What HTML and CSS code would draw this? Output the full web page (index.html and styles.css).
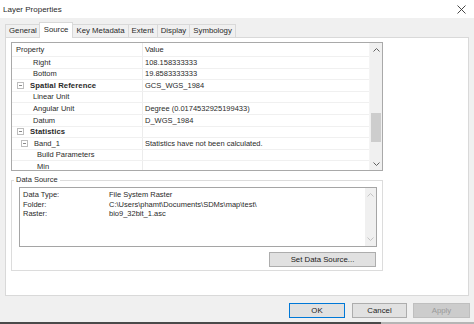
FILE: index.html
```html
<!DOCTYPE html>
<html>
<head>
<meta charset="utf-8">
<link rel="stylesheet" href="styles.css">
</head>
<body>
<div class="window">
  <div class="titlebar">
    <span class="title">Layer Properties</span>
    <svg class="close" width="9" height="9" viewBox="0 0 9 9"><path d="M0.5 0.5 L8.5 8.5 M8.5 0.5 L0.5 8.5" stroke="#333" stroke-width="0.9" fill="none"/></svg>
  </div>
  <div class="tabs">
    <div class="tab">General</div>
    <div class="tab active">Source</div>
    <div class="tab">Key Metadata</div>
    <div class="tab">Extent</div>
    <div class="tab">Display</div>
    <div class="tab">Symbology</div>
  </div>
  <div class="panel">
    <div class="grid">
      <div class="grid-body">
        <div class="row header"><div class="name hdr">Property</div><div class="value">Value</div></div>
        <div class="row"><div class="name l1">Right</div><div class="value">108.158333333</div></div>
        <div class="row"><div class="name l1">Bottom</div><div class="value">19.8583333333</div></div>
        <div class="row"><div class="name cat"><span class="exp"></span><b>Spatial Reference</b></div><div class="value">GCS_WGS_1984</div></div>
        <div class="row"><div class="name l1">Linear Unit</div><div class="value"></div></div>
        <div class="row"><div class="name l1">Angular Unit</div><div class="value">Degree (0.0174532925199433)</div></div>
        <div class="row"><div class="name l1">Datum</div><div class="value">D_WGS_1984</div></div>
        <div class="row"><div class="name cat"><span class="exp"></span><b>Statistics</b></div><div class="value"></div></div>
        <div class="row"><div class="name band"><span class="exp"></span>Band_1</div><div class="value">Statistics have not been calculated.</div></div>
        <div class="row"><div class="name l2">Build Parameters</div><div class="value"></div></div>
        <div class="row"><div class="name l2">Min</div><div class="value"></div></div>
      </div>
      <div class="vscroll">
        <div class="arrow"><svg width="7" height="4" viewBox="0 0 7 4"><path d="M0.5 3.5 L3.5 0.5 L6.5 3.5" stroke="#606060" stroke-width="1" fill="none"/></svg></div>
        <div class="track"><div class="thumb"></div></div>
        <div class="arrow"><svg width="7" height="4" viewBox="0 0 7 4"><path d="M0.5 0.5 L3.5 3.5 L6.5 0.5" stroke="#606060" stroke-width="1" fill="none"/></svg></div>
      </div>
    </div>
    <fieldset class="group">
      <legend>Data Source</legend>
      <div class="textbox">
        <div class="tb-content">
          <div class="kv"><span>Data Type:</span><span>File System Raster</span></div>
          <div class="kv"><span>Folder:</span><span>C:\Users\phamt\Documents\SDMs\map\test\</span></div>
          <div class="kv"><span>Raster:</span><span>bio9_32bit_1.asc</span></div>
        </div>
        <div class="vscroll small">
          <div class="arrow"><svg width="7" height="4" viewBox="0 0 7 4"><path d="M0.5 3.5 L3.5 0.5 L6.5 3.5" stroke="#c4c4c4" stroke-width="1" fill="none"/></svg></div>
          <div class="track"></div>
          <div class="arrow"><svg width="7" height="4" viewBox="0 0 7 4"><path d="M0.5 0.5 L3.5 3.5 L6.5 0.5" stroke="#c4c4c4" stroke-width="1" fill="none"/></svg></div>
        </div>
      </div>
      <div class="btn-row"><button class="btn setds">Set Data Source...</button></div>
    </fieldset>
  </div>
  <div class="footer">
    <button class="btn ok">OK</button>
    <button class="btn cancel">Cancel</button>
    <button class="btn apply">Apply</button>
  </div>
  <div class="strip"></div>
</div>
</body>
</html>
```
FILE: styles.css
```css
* { box-sizing: border-box; }
body {
  margin: 0;
  background: #f0f0f0;
  font-family: "Liberation Sans", Arial, sans-serif;
  font-size: 7.5px;
  color: #2a2a2a;
  width: 474px;
  height: 324px;
  overflow: hidden;
}
.window { display: flex; flex-direction: column; height: 324px; }
.titlebar {
  height: 18px;
  background: #fff;
  display: flex;
  align-items: center;
  justify-content: space-between;
  padding: 1px 8px 0 3px;
}
.title { font-size: 8px; color: #2a2a2a; }
.close { display: block; margin-top: -1px; }
.tabs {
  height: 19px;
  display: flex;
  align-items: flex-end;
  padding-left: 5px;
}
.tab {
  height: 13px;
  line-height: 12px;
  border: 1px solid #d9d9d9;
  border-bottom: none;
  padding: 0 3px;
  font-size: 7.8px;
  background: #f0f0f0;
  margin-right: -1px;
  color: #2a2a2a;
}
.tab.active {
  background: #fff;
  height: 16px;
  line-height: 14px;
  margin: 0 -1px -1px -1px;
  padding: 0 4px;
  position: relative;
  z-index: 1;
}
.panel {
  height: 259px;
  margin: 0 5px;
  border: 1px solid #d9d9d9;
  background: #fff;
  padding: 4px 0 0 5px;
}
.grid {
  width: 372px;
  height: 129px;
  border: 1px solid #a9a9a9;
  display: flex;
}
.grid-body { flex: 1; overflow: hidden; }
.row {
  display: flex;
  height: 11.6px;
  border-bottom: 1px solid #f0f0f0;
  align-items: stretch;
  line-height: 1;
}
.row.header { height: 14px; }
.name {
  width: 130px;
  display: flex;
  align-items: center;
  white-space: nowrap;
}
.name.hdr { padding-left: 4px; }
.name.l1 { padding-left: 21px; }
.name.l2 { padding-left: 25px; }
.name.cat { padding-left: 5px; }
.name.cat b { font-weight: bold; font-size: 7.7px; letter-spacing: 0.1px; }
.name.band { padding-left: 9px; }
.exp {
  width: 7px;
  height: 7px;
  border: 1px solid #bdbdbd;
  margin-right: 6px;
  position: relative;
  flex: none;
}
.exp::after {
  content: "";
  position: absolute;
  left: 1px;
  right: 1px;
  top: 2px;
  height: 1px;
  background: #8a8a8a;
}
.value {
  flex: 1;
  border-left: 1px solid #ececec;
  padding-left: 2px;
  display: flex;
  align-items: center;
  white-space: nowrap;
}
.vscroll {
  width: 13px;
  background: #f0f0f0;
  display: flex;
  flex-direction: column;
  border-left: 1px solid #f4f4f4;
}
.arrow {
  height: 13px;
  display: flex;
  align-items: center;
  justify-content: center;
}
.arrow svg { display: block; }
.track { flex: 1; }
.thumb {
  margin-top: 57px;
  height: 29px;
  margin-left: 1px;
  margin-right: 1px;
  background: #cdcdcd;
}
.vscroll.small { width: 11px; border-left: none; }
.vscroll.small .arrow { height: 14px; }
.group {
  margin: 4px 0 0 0;
  padding: 2px 5px 3px 7px;
  border: 1px solid #dcdcdc;
  width: 372px;
  min-width: 0;
}
.group legend {
  padding: 0 2px;
  margin-left: -5px;
  line-height: 10px;
  font-size: 7.5px;
  color: #2a2a2a;
}
.textbox {
  height: 60px;
  border: 1px solid #a5a5a5;
  display: flex;
  background: #fff;
}
.tb-content { flex: 1; padding: 2px 3px; }
.kv {
  display: grid;
  grid-template-columns: 86px 1fr;
  line-height: 9.5px;
  white-space: nowrap;
}
.btn-row {
  display: flex;
  justify-content: flex-end;
  margin-top: 5px;
  padding-right: 1px;
}
.btn {
  font-family: "Liberation Sans", Arial, sans-serif;
  font-size: 7.8px;
  color: #222;
  background: #e1e1e1;
  border: 1px solid #adadad;
  height: 15px;
  padding: 0;
  margin: 0;
  line-height: 13px;
}
.setds { width: 107px; }
.footer {
  height: 26px;
  display: flex;
  justify-content: flex-end;
  align-items: flex-start;
  padding: 7px 4px 0 0;
}
.ok { width: 56px; border-color: #0078d7; margin-right: 7px; }
.cancel { width: 55px; margin-right: 6px; }
.apply { width: 57px; background: #cccccc; border-color: #bfbfbf; color: #9a9a9a; }
.strip {
  height: 2px;
  background: linear-gradient(to right, #4a4a4a 0, #4a4a4a 381px, #b5b5b5 381px);
}
```
